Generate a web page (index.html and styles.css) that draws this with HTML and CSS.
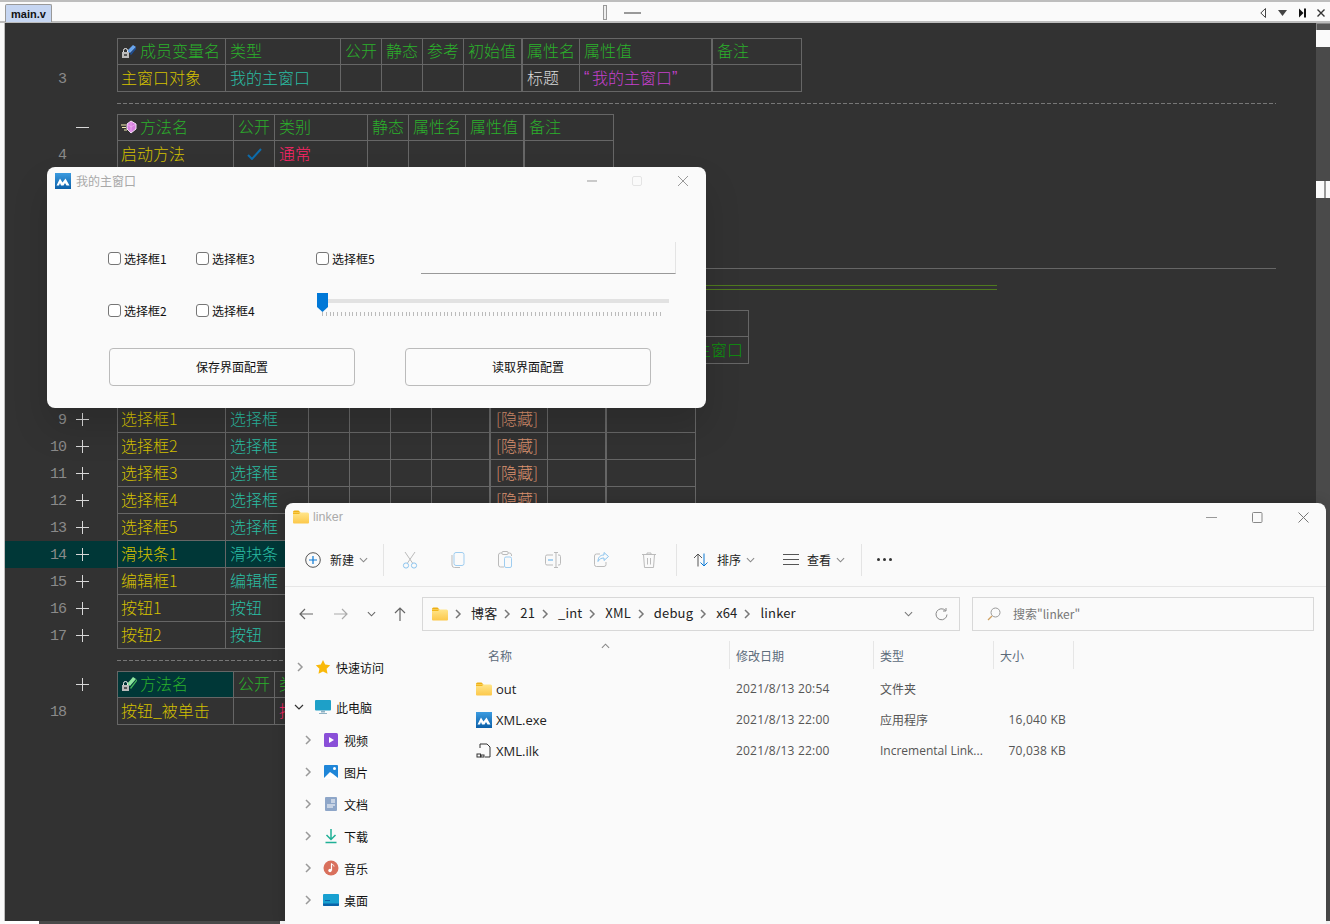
FILE: index.html
```html
<!DOCTYPE html>
<html lang="zh-CN">
<head>
<meta charset="utf-8">
<title>main.v</title>
<link rel="stylesheet" href="styles.css">
</head>
<body>
<svg class="defs" width="0" height="0" aria-hidden="true">
  <defs>
    <linearGradient id="fg" x1="0" y1="0" x2="0" y2="1"><stop offset="0" stop-color="#ffe58a"/><stop offset="1" stop-color="#fcc84a"/></linearGradient>
    <linearGradient id="lg" x1="0" y1="0" x2="0" y2="1"><stop offset="0" stop-color="#3b9be0"/><stop offset="1" stop-color="#0b5fa8"/></linearGradient>
    <symbol id="folder" viewBox="0 0 16 14"><path d="M0 2a1.500 1.500 0 0 1 1.500-1.500h4L7.500 2.500H0z" fill="#eeb014"/><path d="M0 2.500h14.500A1.500 1.500 0 0 1 16 4v8.500a1 1 0 0 1-1 1H1a1 1 0 0 1-1-1z" fill="url(#fg)"/><path d="M0 2.500h7.500L6 4H0z" fill="#f3b71c"/></symbol>
    <symbol id="applogo" viewBox="0 0 16 16"><rect width="16" height="16" fill="url(#lg)"/><path d="M1.500 12.500 5 5.500l2.500 4L10.500 5.500l4 7h-3l-1.500-2.500-1.500 2.500h-2.500L5 10l-1 2.500z" fill="#fff"/></symbol>
    <symbol id="chev" viewBox="0 0 8 10"><path d="M2 1l4 4-4 4" fill="none" stroke="currentColor" stroke-width="1.500"/></symbol>
    <symbol id="chevd" viewBox="0 0 10 6"><path d="M1 1l4 4 4-4" fill="none" stroke="currentColor" stroke-width="1.200"/></symbol>
    <symbol id="lockblue" viewBox="0 0 16 16"><path d="M6 8l6-6 3 2-6 6z" fill="#6aa6ee"/><path d="M9 11l6-7v2l-5 6z" fill="#1c4f9c"/><rect x="1" y="9" width="7" height="6" fill="#bbb"/><path d="M2.500 9V7.500a2 2 0 0 1 4 0V9" fill="none" stroke="#eee"/><rect x="3" y="11" width="3" height="2" fill="#555"/></symbol>
    <symbol id="lockgreen" viewBox="0 0 16 16"><path d="M6 8l6-7 3 2-6 7z" fill="#8fe6a0"/><path d="M9 12l7-9v2l-6 8z" fill="#43b85c"/><rect x="1" y="9" width="7" height="6" fill="#bbb"/><path d="M2.500 9V7.500a2 2 0 0 1 4 0V9" fill="none" stroke="#eee"/><rect x="3" y="11" width="3" height="2" fill="#555"/></symbol>
    <symbol id="gem" viewBox="0 0 16 14"><path d="M10 1l5 3v5l-5 4-4-4V4z" fill="#d77fe0" stroke="#f4e4f5"/><path d="M10 1v12M6 4l4 3 5-3" stroke="#f3c0f7" fill="none" stroke-width=".6"/><path d="M0 5h5M1 7.500h4M3 10h3" stroke="#f2eeb0"/></symbol>
  </defs>
</svg>

<div class="ide">
  <header class="topbar">
    <div class="tab">main.v</div>
    <span class="split-handle"></span>
    <span class="split-dash"></span>
    <div class="tab-tools">
      <svg class="tool t-prev" viewBox="0 0 6 10"><path d="M5.500 .5L.8 5l4.700 4.500z" fill="none" stroke="#444"/></svg>
      <svg class="tool t-down" viewBox="0 0 9 6"><path d="M0 0h9L4.500 6z" fill="#444"/></svg>
      <svg class="tool t-next" viewBox="0 0 7 10"><path d="M0 .5l4.500 4.500L0 9.500z" fill="#111"/><path d="M6 .5v9" stroke="#111" stroke-width="2"/></svg>
      <svg class="tool t-close" viewBox="0 0 8 8"><path d="M.5.500l7 7M7.500.500l-7 7" stroke="#333" stroke-width="1.400"/></svg>
    </div>
  </header>

  <div class="workspace">
    <main class="editor">
      <section class="tbl t1 first">
        <div class="row head"><div class="gut"></div><div class="cells">
          <div class="c hd"><svg class="hicon"><use href="#lockblue"/></svg>成员变量名</div><div class="c hd">类型</div><div class="c hd">公开</div><div class="c hd">静态</div><div class="c hd">参考</div><div class="c hd">初始值</div><div class="c hd dbl">属性名</div><div class="c hd">属性值</div><div class="c hd dbl">备注</div>
        </div></div>
        <div class="row"><div class="gut"><span class="num">3</span></div><div class="cells">
          <div class="c yl">主窗口对象</div><div class="c tl">我的主窗口</div><div class="c"></div><div class="c"></div><div class="c"></div><div class="c"></div><div class="c wh dbl">标题</div><div class="c pu"><span class="q">“</span>我的主窗口<span class="q">”</span></div><div class="c dbl"></div>
        </div></div>
      </section>
      <div class="dashes d1"></div>

      <section class="tbl t2">
        <div class="row head"><div class="gut"><span class="num"></span><span class="pm minus"></span></div><div class="cells">
          <div class="c hd"><svg class="hicon gem"><use href="#gem"/></svg>方法名</div><div class="c hd">公开</div><div class="c hd">类别</div><div class="c hd">静态</div><div class="c hd">属性名</div><div class="c hd">属性值</div><div class="c hd dbl">备注</div>
        </div></div>
        <div class="row"><div class="gut"><span class="num">4</span></div><div class="cells">
          <div class="c yl">启动方法</div><div class="c ck"><svg width="15" height="12" viewBox="0 0 15 12"><path d="M1 7l4 4L14 1" fill="none" stroke="#0d6cab" stroke-width="2"/></svg></div><div class="c rd">通常</div><div class="c"></div><div class="c"></div><div class="c"></div><div class="c dbl"></div>
        </div></div>
      </section>

      <div class="solid"></div>
      <div class="greens"></div>

      <section class="tbl t3">
        <div class="row head"><div class="gut"></div><div class="cells"><div class="c"></div><div class="c"></div></div></div>
        <div class="row"><div class="gut"></div><div class="cells"><div class="c"></div><div class="c gr">我的主窗口</div></div></div>
      </section>

      <section class="tbl t4">
        <div class="row head"><div class="gut"><span class="num">9</span><span class="pm plus"></span></div><div class="cells"><div class="c yl">选择框1</div><div class="c tl">选择框</div><div class="c"></div><div class="c"></div><div class="c"></div><div class="c"></div><div class="c or dbl">[隐藏]</div><div class="c"></div><div class="c dbl"></div></div></div>
        <div class="row"><div class="gut"><span class="num">10</span><span class="pm plus"></span></div><div class="cells"><div class="c yl">选择框2</div><div class="c tl">选择框</div><div class="c"></div><div class="c"></div><div class="c"></div><div class="c"></div><div class="c or dbl">[隐藏]</div><div class="c"></div><div class="c dbl"></div></div></div>
        <div class="row"><div class="gut"><span class="num">11</span><span class="pm plus"></span></div><div class="cells"><div class="c yl">选择框3</div><div class="c tl">选择框</div><div class="c"></div><div class="c"></div><div class="c"></div><div class="c"></div><div class="c or dbl">[隐藏]</div><div class="c"></div><div class="c dbl"></div></div></div>
        <div class="row"><div class="gut"><span class="num">12</span><span class="pm plus"></span></div><div class="cells"><div class="c yl">选择框4</div><div class="c tl">选择框</div><div class="c"></div><div class="c"></div><div class="c"></div><div class="c"></div><div class="c or dbl">[隐藏]</div><div class="c"></div><div class="c dbl"></div></div></div>
        <div class="row"><div class="gut"><span class="num">13</span><span class="pm plus"></span></div><div class="cells"><div class="c yl">选择框5</div><div class="c tl">选择框</div><div class="c"></div><div class="c"></div><div class="c"></div><div class="c"></div><div class="c dbl"></div><div class="c"></div><div class="c dbl"></div></div></div>
        <div class="row hl"><div class="gut"><span class="num">14</span><span class="pm plus"></span></div><div class="cells"><div class="c yl">滑块条1</div><div class="c tl">滑块条</div><div class="c"></div><div class="c"></div><div class="c"></div><div class="c"></div><div class="c dbl"></div><div class="c"></div><div class="c dbl"></div></div></div>
        <div class="row"><div class="gut"><span class="num">15</span><span class="pm plus"></span></div><div class="cells"><div class="c yl">编辑框1</div><div class="c tl">编辑框</div><div class="c"></div><div class="c"></div><div class="c"></div><div class="c"></div><div class="c dbl"></div><div class="c"></div><div class="c dbl"></div></div></div>
        <div class="row"><div class="gut"><span class="num">16</span><span class="pm plus"></span></div><div class="cells"><div class="c yl">按钮1</div><div class="c tl">按钮</div><div class="c"></div><div class="c"></div><div class="c"></div><div class="c"></div><div class="c dbl"></div><div class="c"></div><div class="c dbl"></div></div></div>
        <div class="row"><div class="gut"><span class="num">17</span><span class="pm plus"></span></div><div class="cells"><div class="c yl">按钮2</div><div class="c tl">按钮</div><div class="c"></div><div class="c"></div><div class="c"></div><div class="c"></div><div class="c dbl"></div><div class="c"></div><div class="c dbl"></div></div></div>
      </section>
      <div class="dashes d2"></div>

      <section class="tbl t2 t5">
        <div class="row head"><div class="gut"><span class="num"></span><span class="pm plus"></span></div><div class="cells">
          <div class="c hd hlc"><svg class="hicon"><use href="#lockgreen"/></svg>方法名</div><div class="c hd">公开</div><div class="c hd">类别</div><div class="c"></div><div class="c"></div><div class="c"></div><div class="c dbl"></div>
        </div></div>
        <div class="row"><div class="gut"><span class="num">18</span></div><div class="cells">
          <div class="c yl">按钮_被单击</div><div class="c"></div><div class="c rd">按钮</div><div class="c"></div><div class="c"></div><div class="c"></div><div class="c dbl"></div>
        </div></div>
      </section>
    </main>
    <aside class="vscroll">
      <div class="vs-cap"></div>
      <div class="vs-white"></div>
      <div class="vs-track"></div>
      <div class="vs-white vs-mark"></div>
    </aside>
  </div>
  <div class="hscroll"><span class="hs-thumb"></span><span class="hs-track"></span></div>
</div>

<!-- dialog window -->
<section class="dialog">
  <div class="dlg-title">
    <svg class="dlg-logo"><use href="#applogo"/></svg>
    <span class="dlg-name">我的主窗口</span>
    <div class="dlg-ctrls">
      <svg width="10" height="10" viewBox="0 0 10 10"><path d="M0 5h10" stroke="#999"/></svg>
      <svg width="10" height="10" viewBox="0 0 10 10"><rect x=".5" y=".5" width="9" height="9" rx="1.500" fill="none" stroke="#e4e4e4"/></svg>
      <svg width="10" height="10" viewBox="0 0 10 10"><path d="M0 0l10 10M10 0L0 10" stroke="#999"/></svg>
    </div>
  </div>
  <div class="dlg-grid">
    <label class="chk"><span class="box"></span>选择框1</label>
    <label class="chk"><span class="box"></span>选择框3</label>
    <div class="dlg-r1"><label class="chk chk5"><span class="box"></span>选择框5</label><div class="dlg-input"></div></div>
    <label class="chk"><span class="box"></span>选择框2</label>
    <label class="chk"><span class="box"></span>选择框4</label>
    <div class="slider">
      <div class="sl-track"></div>
      <div class="sl-ticks"></div>
      <svg class="sl-thumb" viewBox="0 0 11 19"><path d="M0 0h11v14l-5.500 5L0 14z" fill="#0078d7"/></svg>
    </div>
  </div>
  <div class="dlg-btns">
    <button class="dlg-btn">保存界面配置</button>
    <button class="dlg-btn">读取界面配置</button>
  </div>
</section>

<!-- explorer window -->
<section class="explorer">
  <div class="ex-title">
    <svg class="ex-folder"><use href="#folder"/></svg>
    <span class="ex-name">linker</span>
    <div class="ex-ctrls">
      <svg width="11" height="11" viewBox="0 0 11 11"><path d="M0 5.500h11" stroke="#999"/></svg>
      <svg width="11" height="11" viewBox="0 0 11 11"><rect x=".5" y=".5" width="9.500" height="10" rx="1" fill="none" stroke="#888"/></svg>
      <svg width="11" height="11" viewBox="0 0 11 11"><path d="M.5.500l10 10M10.500.500l-10 10" stroke="#777"/></svg>
    </div>
  </div>

  <div class="ex-toolbar">
    <div class="tb-new">
      <svg width="16" height="16" viewBox="0 0 16 16"><circle cx="8" cy="8" r="7.300" fill="none" stroke="#555"/><path d="M8 4v8M4 8h8" stroke="#0a78d4" stroke-width="1.200"/></svg>
      <span class="tb-text">新建</span><svg class="dn"><use href="#chevd"/></svg>
    </div>
    <span class="tb-sep s1"></span>
    <div class="tb-icons">
      <svg width="16" height="18" viewBox="0 0 16 18"><path d="M3 1l7.500 11M13 1L5.500 12" fill="none" stroke="#bbb"/><circle cx="4" cy="14.500" r="2.600" fill="none" stroke="#8cc4ee"/><circle cx="12" cy="14.500" r="2.600" fill="none" stroke="#8cc4ee"/></svg>
      <svg width="14" height="16" viewBox="0 0 14 16"><rect x="3" y=".5" width="10" height="13" rx="2" fill="none" stroke="#9fcdf0"/><path d="M1 3v10a2.500 2.500 0 0 0 2.500 2.500H9" fill="none" stroke="#bbb"/></svg>
      <svg width="14" height="17" viewBox="0 0 14 17"><path d="M4 2H2.500A2 2 0 0 0 .5 4v10A2 2 0 0 0 2.500 16H6M10 2h1.500a2 2 0 0 1 2 2v1" fill="none" stroke="#bbb"/><rect x="4" y=".5" width="6" height="3" rx="1" fill="none" stroke="#bbb"/><rect x="6.500" y="6" width="7" height="10.500" rx="1.500" fill="none" stroke="#9fcdf0"/></svg>
      <svg width="16" height="16" viewBox="0 0 16 16"><path d="M8 3H2a1.500 1.500 0 0 0-1.500 1.500v7A1.500 1.500 0 0 0 2 13h6M13 3h1a1.500 1.500 0 0 1 1.500 1.500v7A1.500 1.500 0 0 1 14 13h-1" fill="none" stroke="#bbb"/><path d="M3 8h5" stroke="#8cc4ee" stroke-width="1.500"/><path d="M9 .5h4M9 15.500h4M11 .5v15" stroke="#bbb" fill="none"/></svg>
      <svg width="15" height="15" viewBox="0 0 15 15"><path d="M6 2H2.500a2 2 0 0 0-2 2v8.500a2 2 0 0 0 2 2H10a2 2 0 0 0 2-2V10" fill="none" stroke="#bbb"/><path d="M14.500 4.500L10 .5v2.500C6 3 4 5.500 4 9.500c1.500-2.500 3-3.500 6-3.500v2.500z" fill="none" stroke="#8cc4ee"/></svg>
      <svg width="14" height="16" viewBox="0 0 14 16"><path d="M0 2.500h14M5 2.500V1h4v1.500M1.500 2.500L2.500 15.500h9l1-13M5.500 6v6.500M8.500 6v6.500" fill="none" stroke="#bbb"/></svg>
    </div>
    <span class="tb-sep s2"></span>
    <div class="tb-item sort">
      <svg width="16" height="14" viewBox="0 0 16 14"><path d="M5 13.500V1M1 5l4-4 4 4" fill="none" stroke="#555"/><path d="M11 .5V13M7.500 9.500L11 13l3.500-3.500" fill="none" stroke="#0a78d4"/></svg>
      <span class="tb-text">排序</span><svg class="dn"><use href="#chevd"/></svg>
    </div>
    <div class="tb-item view">
      <svg width="16" height="11" viewBox="0 0 16 11"><path d="M0 .5h16M0 5.500h16M0 10.500h16" stroke="#555"/></svg>
      <span class="tb-text">查看</span><svg class="dn"><use href="#chevd"/></svg>
    </div>
    <span class="tb-sep s3"></span>
    <span class="tb-more"><i></i><i></i><i></i></span>
  </div>

  <div class="ex-nav">
    <div class="nav-btns">
      <svg width="14" height="12" viewBox="0 0 14 12"><path d="M14 6H1M6 1L1 6l5 5" fill="none" stroke="#666" stroke-width="1.200"/></svg>
      <svg width="14" height="12" viewBox="0 0 14 12"><path d="M0 6h13M8 1l5 5-5 5" fill="none" stroke="#aaa" stroke-width="1.200"/></svg>
      <svg class="dn nav-dn"><use href="#chevd"/></svg>
      <svg width="12" height="14" viewBox="0 0 12 14"><path d="M6 14V1M1 6l5-5 5 5" fill="none" stroke="#666" stroke-width="1.200"/></svg>
    </div>
    <div class="addr">
      <svg class="addr-folder"><use href="#folder"/></svg>
      <svg class="cr"><use href="#chev"/></svg><span>博客</span>
      <svg class="cr"><use href="#chev"/></svg><span>21</span>
      <svg class="cr"><use href="#chev"/></svg><span>_int</span>
      <svg class="cr"><use href="#chev"/></svg><span>XML</span>
      <svg class="cr"><use href="#chev"/></svg><span>debug</span>
      <svg class="cr"><use href="#chev"/></svg><span>x64</span>
      <svg class="cr"><use href="#chev"/></svg><span>linker</span>
      <svg class="dn addr-dn"><use href="#chevd"/></svg>
      <svg class="addr-ref" width="13" height="13" viewBox="0 0 13 13"><path d="M10.500 2.500A5.500 5.500 0 1 0 12 6.500M11 0v3H8" fill="none" stroke="#888"/></svg>
    </div>
    <div class="search">
      <svg width="14" height="14" viewBox="0 0 14 14"><circle cx="8.500" cy="5.500" r="4.500" fill="none" stroke="#999"/><path d="M5 9l-4 4" stroke="#d0a060" stroke-width="1.200"/></svg>
      <span>搜索"linker"</span>
    </div>
  </div>

  <div class="ex-body">
    <nav class="side">
      <div class="sd top"><svg class="sd-ch"><use href="#chev"/></svg><svg class="sd-ic" viewBox="0 0 16 16"><path d="M8 1l2.200 4.600 5 .7-3.600 3.500.9 5L8 12.400l-4.500 2.400.9-5L.8 6.300l5-.7z" fill="#f9b90a"/></svg><span>快速访问</span></div>
      <div class="sd pc"><svg class="sd-chd"><use href="#chevd"/></svg><svg class="sd-ic" viewBox="0 0 16 16"><rect y="1" width="16" height="10.500" rx="1" fill="#1ea0c8"/><path d="M6 11.500h4v2H6zM4 14h8v1H4z" fill="#8fb2c4"/></svg><span>此电脑</span></div>
      <div class="sd sub"><svg class="sd-ch"><use href="#chev"/></svg><svg class="sd-ic" viewBox="0 0 16 16"><rect x="1" y="1" width="14" height="14" rx="1.500" fill="#8a4fd8"/><path d="M6 5l5 3-5 3z" fill="#fff"/></svg><span>视频</span></div>
      <div class="sd sub"><svg class="sd-ch"><use href="#chev"/></svg><svg class="sd-ic" viewBox="0 0 16 16"><rect x="1" y="1" width="14" height="14" rx="1" fill="#1f86d8"/><path d="M1 14l6-6 3 2 5 4v1H1z" fill="#fff"/><circle cx="11.500" cy="4.500" r="1.500" fill="#fff"/></svg><span>图片</span></div>
      <div class="sd sub"><svg class="sd-ch"><use href="#chev"/></svg><svg class="sd-ic" viewBox="0 0 16 16"><rect x="2" y="1" width="12" height="14" rx="1" fill="#8ea6c8"/><path d="M8 4h4M8 6h4M4 9h8M4 11h6" stroke="#fff"/></svg><span>文档</span></div>
      <div class="sd sub"><svg class="sd-ch"><use href="#chev"/></svg><svg class="sd-ic" viewBox="0 0 16 16"><path d="M8 1v10M3.500 7L8 11.500 12.500 7M2.500 14.500h11" fill="none" stroke="#1fb096" stroke-width="1.500"/></svg><span>下载</span></div>
      <div class="sd sub"><svg class="sd-ch"><use href="#chev"/></svg><svg class="sd-ic" viewBox="0 0 16 16"><circle cx="8" cy="8" r="7.500" fill="#d9705c"/><path d="M8.500 3.500v7" stroke="#fff" stroke-width="1.200"/><circle cx="7" cy="10.500" r="1.700" fill="#fff"/><path d="M8.500 3.500c1 1.500 2.500 1 2.500 3" stroke="#fff" fill="none"/></svg><span>音乐</span></div>
      <div class="sd sub"><svg class="sd-ch"><use href="#chev"/></svg><svg class="sd-ic" viewBox="0 0 16 16"><rect y="2" width="16" height="12" rx="1" fill="#18a0d0"/><path d="M0 11.500h16V13a1 1 0 0 1-1 1H1a1 1 0 0 1-1-1zM2 8h5v1H2z" fill="#0a62a8"/></svg><span>桌面</span></div>
    </nav>
    <div class="list">
      <div class="lhead">
        <div class="lh lh-name">名称<svg class="sort-ch"><use href="#chevd"/></svg></div>
        <div class="lh">修改日期</div>
        <div class="lh">类型</div>
        <div class="lh">大小</div>
      </div>
      <div class="lrow"><div class="fname"><svg class="ficon fold"><use href="#folder"/></svg>out</div><div>2021/8/13 20:54</div><div>文件夹</div><div class="fsize"></div></div>
      <div class="lrow"><div class="fname"><svg class="ficon"><use href="#applogo"/></svg>XML.exe</div><div>2021/8/13 22:00</div><div>应用程序</div><div class="fsize">16,040 KB</div></div>
      <div class="lrow"><div class="fname"><svg class="ficon" viewBox="0 0 16 16"><path d="M4 5V1h7l3 3v10H9" fill="none" stroke="#333"/><rect x="1" y="11" width="3.500" height="3" fill="none" stroke="#333"/><rect x="5" y="12" width="3" height="2" fill="none" stroke="#333"/></svg>XML.ilk</div><div>2021/8/13 22:00</div><div>Incremental Link...</div><div class="fsize">70,038 KB</div></div>
    </div>
  </div>
</section>
</body>
</html>
```

FILE: styles.css
```css
* { box-sizing: border-box; }
html, body { margin: 0; height: 924px; overflow: hidden; }
body {
  position: relative;
  width: 1330px;
  background: #fafafa;
  font-family: "Noto Sans CJK SC", "Liberation Sans", sans-serif;
}
.defs { position: absolute; }

/* IDE shell */
.ide { display: flex; flex-direction: column; height: 924px; }
.topbar {
  display: flex;
  align-items: center;
  height: 23px;
  padding: 2px 5px 0;
  background: #fafafa;
  border-top: 2px solid #bdbdbd;
  border-bottom: 2px solid #bdbdbd;
}
.tab {
  align-self: flex-end;
  width: 47px;
  height: 18px;
  margin-bottom: -1px;
  background: #c6d6f2;
  border: 1px solid #999;
  border-bottom: 0;
  border-radius: 2px 2px 0 0;
  font: bold 11px/18px "Liberation Sans", sans-serif;
  text-align: center;
  color: #111;
}
.split-handle { width: 4px; height: 15px; margin-left: 551px; border: 1px solid #999; background: #eee; }
.split-dash { width: 17px; height: 2px; margin-left: 17px; background: #999; }
.tab-tools { display: flex; align-items: center; margin-left: auto; gap: 12px; }
.tool { flex: none; }
.t-prev { width: 6px; height: 10px; }
.t-down { width: 9px; height: 6px; }
.t-next { width: 7px; height: 10px; }
.t-close { width: 8px; height: 8px; margin-left: -1px; }

.workspace { flex: 1; display: flex; min-height: 0; }
.editor {
  flex: 1;
  margin-left: 4px;
  padding-top: 15px;
  background: #323232;
  border-left: 1px solid #bdbdbd;
  overflow: hidden;
  font-size: 16px;
  font-weight: 300;
  line-height: 25px;
}
.vscroll { width: 14px; display: flex; flex-direction: column; background: #4a4a4a; }
.vs-cap { height: 7px; background: #555; border-top: 1px solid #888; border-left: 1px solid #888; }
.vs-white { height: 17px; background: #fafafa; }
.vs-track { height: 134px; }
.vs-mark { background: linear-gradient(90deg, #fafafa 8px, #999 8px, #999 10px, #fafafa 10px); }
.hscroll { display: flex; height: 3px; margin-left: 5px; }
.hs-thumb { width: 34px; background: #fff; }
.hs-track { width: 241px; background: #4a4a4a; }

/* Tables */
.row { display: flex; height: 27px; }
.gut { width: 112px; flex: none; display: flex; align-items: center; }
.num {
  width: 61px;
  margin-top: 2px;
  text-align: right;
  font: 15px/1 "Liberation Mono", monospace;
  letter-spacing: -1px;
  color: #8a8a8a;
}
.pm { width: 13px; height: 13px; margin-left: 10px; }
.plus { background: linear-gradient(#d8d8d8, #d8d8d8) center / 13px 1px no-repeat, linear-gradient(#d8d8d8, #d8d8d8) center / 1px 13px no-repeat; }
.minus { background: linear-gradient(#d8d8d8, #d8d8d8) center / 13px 1px no-repeat; }
.cells { display: grid; height: 27px; border-left: 1px solid #666; border-bottom: 1px solid #666; }
.head .cells { border-top: 1px solid #666; }
.c {
  padding: 0 0 2px 4px;
  border-right: 1px solid #666;
  white-space: nowrap;
  overflow: hidden;
  display: flex;
  align-items: center;
}
.c:first-child { padding-left: 3px; }
.dbl { border-left: 1px solid #666; box-shadow: inset 1px 0 0 #323232; }
.q { width: 8px; font-family: "Liberation Sans", sans-serif; }
.t1 .cells { grid-template-columns: 108px 115px 41px 41px 41px 58px 58px 132px 90px; width: 685px; }
.t2 .cells { grid-template-columns: 116px 41px 93px 41px 57px 58px 90px; width: 497px; }
.t3 .cells { grid-template-columns: 541px 90px; width: 632px; }
.t4 .cells { grid-template-columns: 108px 83px 41px 41px 41px 58px 58px 58px 90px; width: 579px; }

.dashes { height: 1px; background: repeating-linear-gradient(90deg, #777 0 4px, transparent 4px 6px); margin-left: 112px; width: 1159px; }
.d1 { margin-top: 11px; margin-bottom: 10px; }
.d2 { margin-top: 11px; margin-bottom: 10px; }
.solid { height: 1px; margin: 100px 0 0 112px; width: 1159px; background: #666; }
.greens { height: 5px; margin: 16px 0 0 112px; width: 880px; border-top: 1px solid #4f7a1e; border-bottom: 1px solid #4f7a1e; }
.t3 { margin-top: 20px; }
.t4 { margin-top: 42px; }

.hd { color: #2bb02b; }
.yl { color: #d2c000; }
.tl { color: #2abda3; }
.wh { color: #d8d8d8; }
.pu { color: #c440cc; }
.rd { color: #ff2468; }
.gr { color: #0b960b; }
.or { color: #dd9270; padding-left: 5px; }
.ck { justify-content: center; padding: 0; }
.hl { background: #003737; }
.hlc { background: #003737; }
.hicon { width: 16px; height: 16px; margin-right: 3px; flex: none; }
.hicon.gem { height: 14px; }

/* Dialog window */
.dialog {
  position: absolute;
  left: 47px;
  top: 167px;
  width: 659px;
  height: 241px;
  background: #fafafa;
  border-radius: 8px;
  box-shadow: 0 20px 36px rgba(0,0,0,.14);
}
.dlg-title { display: flex; align-items: center; height: 28px; padding: 0 18px 0 8px; }
.dlg-logo { width: 16px; height: 16px; }
.dlg-name { margin: -2px 0 0 5px; font-size: 12px; color: #a8a8a8; }
.dlg-ctrls { display: flex; gap: 35px; margin-left: auto; }
.dlg-ctrls svg:last-child { margin-left: 1px; }
.dlg-grid {
  display: grid;
  grid-template-columns: 88px 120px 1fr;
  grid-auto-rows: 52px;
  margin-top: 37px;
  padding-left: 61px;
  align-items: center;
}
.chk { display: flex; align-items: center; font-size: 12px; color: #111; }
.box { width: 13px; height: 13px; margin-right: 3px; border: 1px solid #767676; border-radius: 3px; background: #fff; }
.dlg-r1 { display: flex; align-items: center; }
.chk5 { width: 105px; }
.dlg-input { width: 255px; height: 32px; border-bottom: 1px solid #999; border-right: 1px solid #e4e4e4; }
.slider { position: relative; width: 354px; height: 24px; }
.sl-track { position: absolute; left: 6px; right: 1px; top: 1px; height: 4px; background: #e2e2e2; }
.sl-ticks { position: absolute; left: 6px; top: 14px; width: 342px; height: 4px; background: repeating-linear-gradient(90deg, #bbb 0 1px, transparent 1px 3.8px); }
.sl-thumb { position: absolute; left: 1px; top: -5px; width: 11px; height: 19px; }
.dlg-btns { display: flex; gap: 50px; margin: 12px 0 0 62px; }
.dlg-btn {
  width: 246px;
  height: 38px;
  padding: 0 0 2px;
  background: #fbfbfb;
  border: 1px solid #bbb;
  border-radius: 4px;
  font: 12px "Noto Sans CJK SC", sans-serif;
  color: #111;
}

/* Explorer */
.explorer {
  position: absolute;
  left: 285px;
  top: 503px;
  width: 1041px;
  height: 421px;
  background: #fafafa;
  border-radius: 8px 8px 0 0;
  box-shadow: 0 0 14px rgba(0,0,0,.16);
  font-size: 12px;
  color: #222;
}
.ex-title { display: flex; align-items: center; height: 28px; padding: 0 17px 0 8px; }
.ex-folder { width: 16px; height: 14px; }
.ex-name { margin-left: 4px; font: 12.500px "Liberation Sans", sans-serif; color: #aaa; }
.ex-ctrls { display: flex; gap: 35px; margin-left: auto; }

.ex-toolbar { display: flex; align-items: center; height: 56px; padding: 2px 0 0 20px; border-bottom: 1px solid #e6e6e6; }
.tb-new, .tb-item { display: flex; align-items: center; }
.tb-text { margin-left: 9px; }
.dn { width: 9px; height: 6px; margin-left: 5px; color: #888; }
.tb-sep { width: 1px; height: 32px; background: #e4e4e4; }
.s1 { margin-left: 15px; }
.tb-icons { display: flex; align-items: center; width: 292px; padding-left: 18px; gap: 33px; }
.sort { margin-left: 16px; }
.sort .tb-text { margin-left: 8px; }
.view { margin-left: 28px; }
.view .tb-text { margin-left: 8px; }
.s3 { margin-left: 16px; }
.tb-more { display: flex; gap: 3px; margin-left: 15px; }
.tb-more i { width: 3px; height: 3px; border-radius: 50%; background: #333; }

.ex-nav { display: flex; align-items: center; height: 54px; padding-left: 14px; }
.nav-btns { display: flex; align-items: center; width: 123px; }
.nav-btns svg:nth-child(2) { margin-left: 21px; }
.nav-dn { margin-left: 19px; color: #666; }
.nav-btns svg:nth-child(4) { margin-left: 18px; }
.addr {
  display: flex;
  align-items: center;
  width: 538px;
  height: 34px;
  padding: 0 11px 0 9px;
  border: 1px solid #d8d8d8;
  font-size: 13px;
  color: #222;
}
.addr span { margin-top: -3px; letter-spacing: .15px; font-family: "Noto Sans CJK SC", "Open Sans", sans-serif; }
.addr-folder { width: 16px; height: 14px; }
.cr { width: 8px; height: 10px; margin: 0 9px 0 6px; color: #777; }
.addr-dn { margin-left: auto; color: #777; }
.addr-ref { margin-left: 22px; }
.search {
  display: flex;
  align-items: center;
  gap: 12px;
  width: 342px;
  height: 34px;
  margin-left: 12px;
  padding: 0 0 1px 14px;
  border: 1px solid #d8d8d8;
  color: #777;
}

.ex-body { display: flex; }
.side { width: 190px; padding-top: 10px; }
.sd { display: flex; align-items: center; height: 32px; color: #111; }
.sd-ch { width: 8px; height: 10px; margin-left: 11px; color: #999; flex: none; }
.sd-chd { width: 10px; height: 6px; margin-left: 9px; color: #333; flex: none; }
.sd-ic { width: 16px; height: 16px; margin-left: 11px; margin-right: 5px; flex: none; }
.sd.pc { margin: 8px 0 1px; }
.sd.sub .sd-ch { margin-left: 19px; }

.list { flex: 1; }
.lhead { display: grid; grid-template-columns: 255px 144px 120px 80px; height: 28px; align-items: stretch; }
.lh { position: relative; display: flex; align-items: center; padding-left: 6px; border-right: 1px solid #e6e6e6; color: #5c6b7a; }
.lh-name { padding-left: 13px; }
.sort-ch { position: absolute; left: 126px; top: 2px; width: 9px; height: 6px; transform: rotate(180deg); color: #888; }
.lrow { display: grid; grid-template-columns: 255px 144px 120px 80px; height: 31px; align-items: center; color: #555; }
.lrow:nth-child(2) { margin-top: 4px; }
.fname { display: flex; align-items: center; padding-left: 1px; font: 13px "Open Sans", "Liberation Sans", sans-serif; color: #222; }
.ficon { width: 16px; height: 16px; margin-right: 4px; }
.ficon.fold { height: 14px; }
.lrow > div:nth-child(2) { padding-left: 6px; letter-spacing: .2px; font-family: "Open Sans", sans-serif; }
.lrow > div:nth-child(3) { padding-left: 6px; font-family: "Open Sans", "Noto Sans CJK SC", sans-serif; overflow: hidden; white-space: nowrap; }
.fsize { text-align: right; padding-right: 8px; letter-spacing: .2px; font-family: "Open Sans", sans-serif; }
```
